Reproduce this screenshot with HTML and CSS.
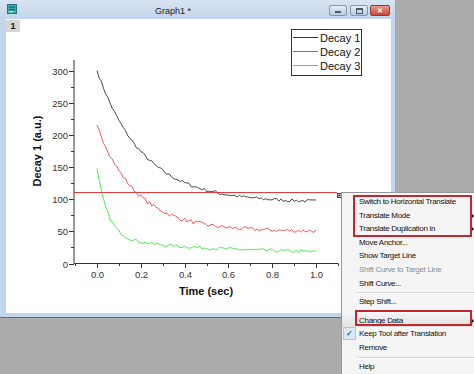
FILE: index.html
```html
<!DOCTYPE html>
<html>

<head>
    <title>Graph1</title>
    <meta charset="utf-8">
    <link rel="stylesheet" href="styles.css">
</head>

<body>

    <div class="window">
        <div class="titlebar">
            <svg class="appicon" width="10" height="10" viewBox="0 0 10 10">
                <rect x="0.5" y="0.5" width="9" height="9" fill="#3fb0a6" stroke="#2a6f86"/>
                <rect x="2" y="2.5" width="6" height="1.2" fill="#1d5a8c"/>
                <rect x="2" y="5" width="6" height="1.2" fill="#1d5a8c"/>
                <rect x="2" y="7.3" width="4" height="1" fill="#e8f4f0"/>
            </svg>
            <span class="title">Graph1 *</span>
            <div class="winbtns">
                <span class="wbtn min"><i></i></span>
                <span class="wbtn max"><i></i></span>
                <span class="wbtn close">✕</span>
            </div>
        </div>
        <div class="frame">
            <div class="content">
                <span class="layer">1</span>
                <svg class="plot" width="385" height="294" viewBox="6 19 385 294">
                    <g id="ticks"></g>
                    <g id="curves"></g>
                    <!-- akser -->
                    <line x1="74" y1="60" x2="74" y2="263.5" stroke="#333" stroke-width="1"/>
                    <line x1="74" y1="263.5" x2="338" y2="263.5" stroke="#333" stroke-width="1"/>
                    <text class="axistitle" x="206" y="295" text-anchor="middle">Time (sec)</text>
                    <text class="axistitle" transform="translate(41 151) rotate(-90)" text-anchor="middle">Decay 1 (a.u.)</text>
                    <!-- legend -->
                    <rect x="291.5" y="29.5" width="70" height="46" fill="#fff" stroke="#333"/>
                    <line x1="293" y1="37.5" x2="318" y2="37.5" stroke="#333"/>
                    <line x1="293" y1="51.5" x2="318" y2="51.5" stroke="#f04848"/>
                    <line x1="293" y1="65.5" x2="318" y2="65.5" stroke="#3ee63e"/>
                    <text class="legend" x="320" y="41.5">Decay 1</text>
                    <text class="legend" x="320" y="55.5">Decay 2</text>
                    <text class="legend" x="320" y="69.5">Decay 3</text>
                    <!-- target linje -->
                    <line x1="74" y1="192.5" x2="337" y2="192.5" stroke="#e83a3a"/>
                    <rect x="337.5" y="193.5" width="4" height="4" fill="#fff" stroke="#444"/>
                    <rect x="338.5" y="194.5" width="2" height="2" fill="#222"/>
                </svg>
            </div>
        </div>
    </div>

    <ul class="menu">
        <li class="item">Switch to Horizontal Translate</li>
        <li class="item sub">Translate Mode</li>
        <li class="item sub">Translate Duplication in</li>
        <li class="item">Move Anchor...</li>
        <li class="item">Show Target Line</li>
        <li class="item off">Shift Curve to Target Line</li>
        <li class="item">Shift Curve...</li>
        <li class="sep"></li>
        <li class="item">Step Shift...</li>
        <li class="sep"></li>
        <li class="item sub hover">Change Data</li>
        <li class="item checked">Keep Tool after Translation</li>
        <li class="item">Remove</li>
        <li class="sep"></li>
        <li class="item">Help</li>
        <li class="mark m1"></li>
        <li class="mark m2"></li>
    </ul>

    <script>
        const NS = "http://www.w3.org/2000/svg";
        const ticks = document.querySelector("#ticks");
        const curves = document.querySelector("#curves");

        // data -> pixel
        function px(t) { return 97 + t * 219; }
        function py(v) { return 263.5 - v * 0.6433; }

        function add(parent, tag, attrs, text) {
            const el = document.createElementNS(NS, tag);
            for (const k in attrs) el.setAttribute(k, attrs[k]);
            if (text) el.textContent = text;
            parent.appendChild(el);
            return el;
        }

        // y ticks
        for (let v = 0; v <= 300; v += 25) {
            const y = Math.round(py(v)) + 0.5;
            const major = v % 50 == 0;
            add(ticks, "line", { x1: major ? 69 : 71, y1: y, x2: 74, y2: y, stroke: "#333" });
            if (major) add(ticks, "text", { class: "ticklabel", x: 68, y: y + 3.5, "text-anchor": "end" }, String(v));
        }
        // x ticks
        for (let i = -1; i <= 11; i++) {
            const x = Math.round(px(i / 10)) + 0.5;
            const major = i % 2 == 0 && i >= 0;
            add(ticks, "line", { x1: x, y1: 263.5, x2: x, y2: major ? 268 : 266, stroke: "#333" });
            if (major) add(ticks, "text", { class: "ticklabel", x: x, y: 278, "text-anchor": "middle" }, (i / 10).toFixed(1));
        }

        // kurver med lidt støj
        let seed = 7;
        function rnd() {
            seed = (seed * 16807) % 2147483647;
            return seed / 2147483647 - 0.5;
        }
        const sets = [
            { color: "#333", f: t => 95 + 205 * Math.exp(-t / 0.21), n: 5 },
            { color: "#f04848", f: t => 50 + 165 * Math.exp(-t / 0.18), n: 6 },
            { color: "#3ee63e", f: t => 15 + 25 * Math.exp(-t / 0.5) + 108 * Math.exp(-t / 0.05), n: 5 }
        ];
        sets.forEach(s => {
            let pts = [];
            for (let i = 0; i <= 100; i++) {
                const t = i / 100;
                const v = s.f(t) + (i == 0 ? 0 : rnd() * s.n);
                pts.push(px(t).toFixed(1) + "," + py(v).toFixed(1));
            }
            add(curves, "polyline", { points: pts.join(" "), fill: "none", stroke: s.color, "stroke-width": 0.9 });
        });
    </script>
</body>

</html>
```

FILE: styles.css
```css
body {
    margin: 0;
    width: 474px;
    height: 374px;
    overflow: hidden;
    position: relative;
    background: #ababab;
    font-family: "Liberation Sans", Arial, sans-serif;
}

.window {
    width: 396px;
    height: 318px;
    box-sizing: border-box;
    display: flex;
    flex-direction: column;
    background: #c3d5ea;
    border-right: 1px solid #98a9bd;
    border-bottom: 1px solid #5d6e80;
}

.titlebar {
    height: 19px;
    flex: none;
    display: flex;
    align-items: center;
    padding: 0 5px 0 7px;
    background: linear-gradient(#d7e4f2, #c3d5ea);
}

.appicon {
    display: block;
    margin-top: -1px;
}

.title {
    flex: 1;
    text-align: center;
    font-size: 9px;
    color: #1e1e1e;
    margin-top: 3px;
}

.winbtns {
    display: flex;
    gap: 2px;
    margin-top: 2px;
}

.wbtn {
    width: 16px;
    height: 9px;
    border: 1px solid #8396ae;
    border-radius: 2px;
    background: linear-gradient(#e6edf6, #b8cadf);
    display: flex;
    align-items: center;
    justify-content: center;
}

.wbtn.min {
    margin-right: 1px;
}

.wbtn.min i {
    width: 6px;
    height: 2px;
    margin-top: 2px;
    background: #4a5a70;
}

.wbtn.max i {
    width: 5px;
    height: 3px;
    border: 1px solid #4a5a70;
    border-top-width: 2px;
}

.wbtn.close {
    width: 18px;
    background: linear-gradient(#e89a90, #c6453a);
    border-color: #8e3b33;
    color: #fff;
    font-size: 7px;
    font-weight: bold;
    line-height: 9px;
}

.frame {
    flex: 1;
    display: flex;
    padding: 0 4px 4px 6px;
}

.content {
    flex: 1;
    background: #ffffff;
    position: relative;
}

.layer {
    position: absolute;
    top: 1px;
    left: 0;
    width: 14px;
    height: 12px;
    background: #d6d6d6;
    font-size: 9px;
    font-weight: bold;
    line-height: 12px;
    text-align: center;
    color: #111;
}

.plot {
    display: block;
}

.ticklabel {
    font-size: 9.5px;
    fill: #333;
}

.axistitle {
    font-size: 11px;
    font-weight: bold;
    fill: #111;
}

.legend {
    font-size: 11px;
    fill: #111;
}

/* kontekst menu */
.menu {
    position: absolute;
    left: 341px;
    top: 192px;
    width: 140px;
    height: 190px;
    margin: 0;
    padding: 2px 0 0 0;
    list-style: none;
    background: #f5f5f5;
    border: 1px solid #979797;
    font-size: 8px;
    letter-spacing: -0.3px;
    color: #111;
}

.item {
    position: relative;
    height: 13.6px;
    line-height: 13.6px;
    padding-left: 17px;
    white-space: nowrap;
}

.item.off {
    color: #8d8d8d;
}

.item.hover {
    background: linear-gradient(#f2f2f2, #e2e2e2);
}

.sub::after {
    content: "";
    position: absolute;
    right: 8px;
    top: 4px;
    border-left: 3px solid #111;
    border-top: 3px solid transparent;
    border-bottom: 3px solid transparent;
}

.checked::before {
    content: "✓";
    position: absolute;
    left: 1px;
    top: 0;
    width: 11px;
    height: 11px;
    line-height: 11px;
    text-align: center;
    font-size: 8px;
    font-weight: bold;
    color: #2a5c96;
    background: #dbe9f8;
    border: 1px solid #a9c6e6;
}

.sep {
    height: 1px;
    margin: 2px 0 1px 15px;
    background: #d5d5d5;
    border-bottom: 1px solid #fff;
}

.mark {
    position: absolute;
    border: 2.5px solid #c1272d;
}

.m1 {
    left: 11px;
    top: 2px;
    width: 115px;
    height: 38px;
}

.m2 {
    left: 13px;
    top: 117px;
    width: 113px;
    height: 12px;
}
```
